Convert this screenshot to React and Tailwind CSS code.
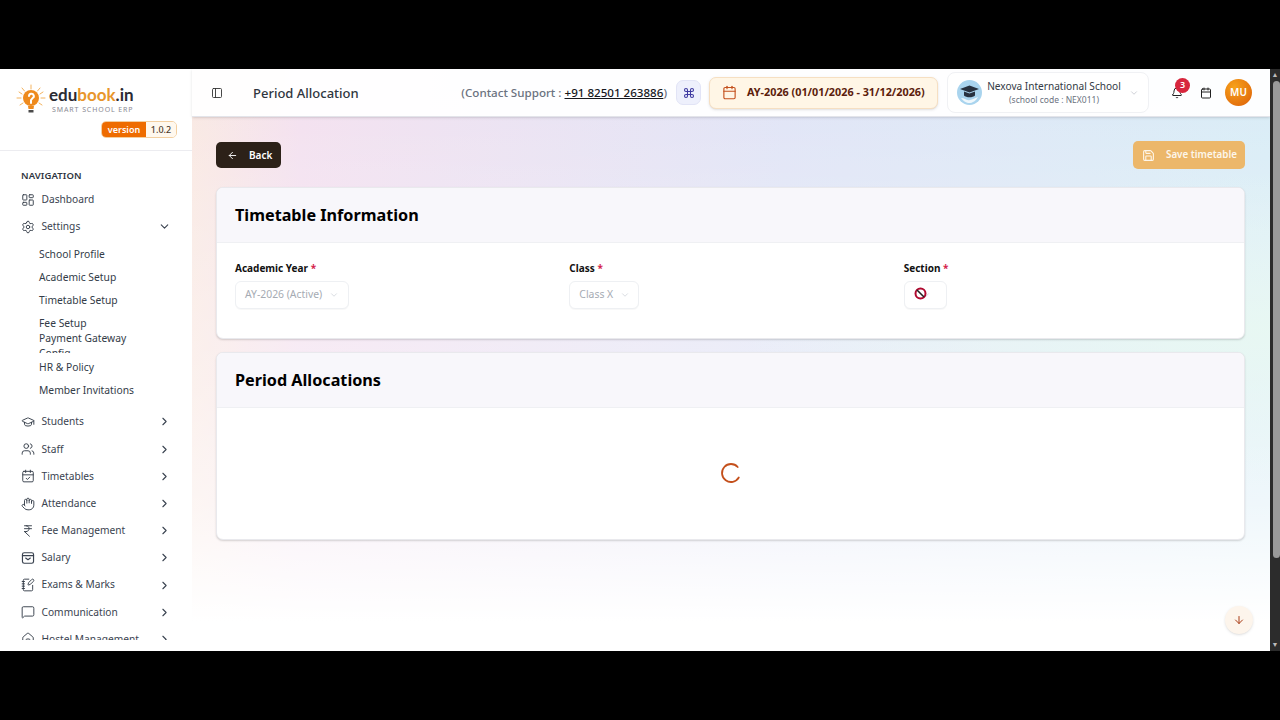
import React from 'react';
import {
  ArrowDown,
  ArrowLeft,
  Bell,
  Calendar,
  ChevronDown,
  ChevronRight,
  Command,
  GraduationCap,
  Hand,
  House,
  IndianRupee,
  LayoutDashboard,
  LoaderCircle,
  MessageSquare,
  NotebookPen,
  PanelLeft,
  Save,
  Settings,
  Users,
  CalendarCheck,
} from 'lucide-react';

const font = { fontFamily: '"Noto Sans", "Open Sans", sans-serif' };

const SalaryIcon = ({ size = 14 }) => (
  <svg width={size} height={size} viewBox="0 0 24 24" fill="none" stroke="currentColor" strokeWidth="2" strokeLinecap="round" strokeLinejoin="round">
    <rect x="2.5" y="3" width="19" height="18" rx="3" />
    <path d="M2.5 8h19" />
    <path d="M8 12l4 3 4-3" />
  </svg>
);

const Logo = () => (
  <svg width="30" height="32" viewBox="0 0 30 32" fill="none">
    <g stroke="#f4b35e" strokeWidth="1" strokeLinecap="round">
      <path d="M15 1v4M6 4l2.5 3M24 4l-2.5 3M1 14h4M25 14h4M3 8l3 2M27 8l-3 2M4 21l3-2M26 21l-3-2" />
    </g>
    <circle cx="15" cy="14" r="8" fill="#ee8a1d" />
    <path d="M12 22h6l-.5 3h-5z" fill="#ee8a1d" />
    <path d="M12.5 26h5v2.5h-5z" fill="#4a4a4a" />
    <path d="M13 12a2.4 2.4 0 1 1 3.5 2.2L15 16v3" stroke="#fff" strokeWidth="2" strokeLinecap="round" />
  </svg>
);

const SchoolLogo = () => (
  <svg width="25" height="25" viewBox="0 0 25 25">
    <circle cx="12.5" cy="12.5" r="12.5" fill="#a9d4ee" />
    <path d="M3 9l9.5-3.5L22 9l-9.5 3.5z" fill="#27313f" />
    <path d="M7 11.5v4c2 2.4 9 2.4 11 0v-4l-5.5 2z" fill="#27313f" />
    <path d="M4 18c4 0 5 3 9 2s5-2 8-3c-2 4-6 6.5-10 6-3-.5-5-2.500-7-5z" fill="#eef7fc" />
  </svg>
);

const SubItem = ({ children }) => (
  <div className="h-[23px] leading-[23px] text-[10.3px] text-[#333c48] whitespace-nowrap">{children}</div>
);

const NavItem = ({ icon: Icon, label, open, arrow = true }) => (
  <div className="h-[27.2px] flex items-center text-[#3a4350] shrink-0">
    <Icon size={14} strokeWidth={1.6} className="text-[#343c48] shrink-0" />
    <span className="ml-[6.500px] text-[10.2px] flex-1 whitespace-nowrap">{label}</span>
    {arrow && (open ? <ChevronDown size={13} strokeWidth={2} /> : <ChevronRight size={13} strokeWidth={2} />)}
  </div>
);

const Sidebar = () => (
  <aside className="w-[192px] shrink-0 h-full bg-white flex flex-col">
    <div className="h-[82px] shrink-0 border-b border-[#ececf0] relative pt-[15px] pl-[16px]">
      <div className="flex items-start">
        <Logo />
        <div className="ml-[3px]">
          <div className="text-[17px] leading-[22px] font-bold text-[#2b2b33]" style={{ fontFamily: 'Lato, sans-serif' }}>
            edu<span className="text-[#e8962c]">book</span>.in
          </div>
          <div className="ml-[3px] text-[7px] leading-[8px] tracking-[0.9px] text-[#8a8a93] whitespace-nowrap">SMART SCHOOL ERP</div>
        </div>
      </div>
      <div className="absolute left-[101px] top-[52px] w-[76px] h-[17px] flex rounded-[5px] border border-[#f3cfa0] overflow-hidden text-[9px] font-semibold">
        <div className="w-[44px] bg-[#ee6c00] text-white flex items-center justify-center">version</div>
        <div className="flex-1 bg-[#fff8ee] text-[#4a3a2c] flex items-center justify-center font-medium">1.0.2</div>
      </div>
    </div>
    <nav className="pl-[21px] pr-[21px] flex-1 min-h-0 flex flex-col">
      <div className="mt-[19px] text-[9.500px] leading-[12px] font-semibold tracking-[0.1px] text-[#2e3540]">NAVIGATION</div>
      <div className="mt-[4px] h-[454px] overflow-hidden flex flex-col">
        <NavItem icon={LayoutDashboard} label="Dashboard" arrow={false} />
        <NavItem icon={Settings} label="Settings" open />
        <div className="pl-[18px] pt-[3px] pb-[6px] shrink-0">
          <SubItem>School Profile</SubItem>
          <SubItem>Academic Setup</SubItem>
          <SubItem>Timetable Setup</SubItem>
          <SubItem>Fee Setup</SubItem>
          <div className="h-[22px] -mt-[4px] mb-[3px] overflow-hidden text-[10.3px] leading-[15px] text-[#333c48]">
            Payment Gateway
            <br />
            Config
          </div>
          <SubItem>HR &amp; Policy</SubItem>
          <SubItem>Member Invitations</SubItem>
        </div>
        <NavItem icon={GraduationCap} label="Students" />
        <NavItem icon={Users} label="Staff" />
        <NavItem icon={CalendarCheck} label="Timetables" />
        <NavItem icon={Hand} label="Attendance" />
        <NavItem icon={IndianRupee} label="Fee Management" />
        <NavItem icon={SalaryIcon} label="Salary" />
        <NavItem icon={NotebookPen} label="Exams & Marks" />
        <NavItem icon={MessageSquare} label="Communication" />
        <NavItem icon={House} label="Hostel Management" />
      </div>
    </nav>
  </aside>
);

const Header = () => (
  <header className="h-[48px] shrink-0 bg-white/95 border-b border-[#e3e4ea] shadow-sm flex items-center pl-[19px]">
    <PanelLeft size={12} strokeWidth={1.8} className="text-[#333]" />
    <div className="ml-[30px] mt-[2px] text-[13px] text-[#2f3640] font-medium">Period Allocation</div>
    <div className="ml-auto text-[11.6px] font-medium text-[#6b7280] whitespace-nowrap">
      (Contact Support : <span className="text-[#16181d] underline">+91 82501 263886</span>)
    </div>
    <div className="ml-[9px] w-[25px] h-[25px] rounded-[7px] bg-[#eef0fc] border border-[#e2e4f6] flex items-center justify-center">
      <Command size={12} strokeWidth={2.2} className="text-[#3f3aa0]" />
    </div>
    <div className="ml-[8px] w-[229px] h-[32px] rounded-[7px] bg-[#fff6e6] border border-[#f6dfc2] shadow-sm flex items-center pl-[12px] text-[10.8px] font-bold text-[#5c1d0c] whitespace-nowrap">
      <Calendar size={15} strokeWidth={1.8} className="text-[#c4501c] mr-[10px]" />
      AY-2026 (01/01/2026 - 31/12/2026)
    </div>
    <div className="ml-[9px] w-[202px] h-[41px] rounded-[8px] bg-white border border-[#f0f1f4] flex items-center pl-[9px]">
      <SchoolLogo />
      <div className="ml-[5px] w-[134px] text-center">
        <div className="text-[10.1px] leading-[14px] text-[#333a45] whitespace-nowrap">Nexova International School</div>
        <div className="text-[8.500px] leading-[14px] text-[#6b7280] whitespace-nowrap">(school code : NEX011)</div>
      </div>
      <ChevronDown size={10} className="ml-[8px] text-[#c5c8cf]" />
    </div>
    <div className="relative ml-[22px] w-[12px] h-[12px]">
      <Bell size={12} strokeWidth={2} className="text-[#222]" />
      <div className="absolute -top-[9px] left-[4px] w-[15px] h-[15px] rounded-full bg-[#d7263d] text-white text-[9px] font-semibold flex items-center justify-center">3</div>
    </div>
    <Calendar size={12} strokeWidth={2} className="ml-[17px] text-[#222]" />
    <div className="ml-[13px] mr-[18px] w-[27px] h-[27px] rounded-full bg-[radial-gradient(circle_at_35%_30%,#f7a21b,#dc5f08)] text-white text-[10px] font-semibold flex items-center justify-center">MU</div>
  </header>
);

const Field = ({ label, value, width }) => (
  <div>
    <div className="text-[10px] leading-[14px] font-bold text-[#111]">
      {label} <span className="text-[#d41e4b]">*</span>
    </div>
    <div className={`mt-[6px] h-[28px] ${width} rounded-[6px] bg-white border border-[#eef0f3] shadow-[0_1px_1px_rgba(0,0,0,0.03)] flex items-center pl-[9px] text-[10.4px] text-[#a6abb3] whitespace-nowrap`}>
      {value}
      <ChevronDown size={10} className="ml-[7px] text-[#d3d6dc]" />
    </div>
  </div>
);

const CardTitle = ({ children }) => (
  <div className="h-[55px] bg-[#f8f7fb] border-b border-[#eff0f3] flex items-center pl-[18px] text-[16.2px] font-bold text-black">{children}</div>
);

const App = () => (
  <div className="h-[720px] w-[1280px] bg-black flex flex-col overflow-hidden" style={font}>
    <div className="h-[69px] shrink-0" />
    <div className="h-[582px] shrink-0 flex relative">
      <Sidebar />
      <div className="flex-1 min-w-0 flex flex-col bg-[radial-gradient(ellipse_at_100%_45%,rgba(232,248,242,0.9),rgba(232,248,242,0)_35%),linear-gradient(180deg,rgba(255,255,255,0)_0%,rgba(255,255,255,0.4)_55%,rgba(255,255,255,0.6)_75%,#ffffff_95%),linear-gradient(90deg,#f9e8e2_0%,#f3e0ef_10%,#e0e4f6_55%,#d8ecf6_100%)]">
        <Header />
        <main className="flex-1 min-h-0 pl-[24px] pr-[25px] pt-[24px]">
          <div className="h-[28px] flex items-center justify-between">
            <button className="w-[65px] h-[26px] rounded-[5px] bg-[#2c2118] text-white text-[10px] font-semibold flex items-center pl-[11px]">
              <ArrowLeft size={11} strokeWidth={2} />
              <span className="ml-[11px]">Back</span>
            </button>
            <button className="w-[112px] h-[28px] rounded-[5px] bg-[#ecb76a] text-[#fdf6ea] text-[9.800px] font-semibold flex items-center pl-[9px]">
              <Save size={13} strokeWidth={2} />
              <span className="ml-[11px]">Save timetable</span>
            </button>
          </div>
          <section className="h-[152px] mt-[18px] rounded-[7px] bg-white border border-[#e9e9ed] shadow-[0_1px_2px_rgba(0,0,0,0.16)] overflow-hidden">
            <CardTitle>Timetable Information</CardTitle>
            <div className="grid grid-cols-3 pl-[18px] pr-[6px] pt-[18px]">
              <Field label="Academic Year" value="AY-2026 (Active)" width="w-[114px]" />
              <Field label="Class" value="Class X" width="w-[70px]" />
              <div className="relative">
                <Field label="Section" value="" width="w-[43px]" />
                <svg className="absolute left-[10px] top-[26px]" width="13" height="13" viewBox="0 0 13 13" fill="none">
                  <circle cx="6.500" cy="6.500" r="5" fill="#fff" stroke="#b0092f" strokeWidth="2" />
                  <path d="M3 3l7 7" stroke="#222" strokeWidth="1.600" />
                </svg>
              </div>
            </div>
          </section>
          <section className="h-[188px] mt-[13px] rounded-[7px] bg-white border border-[#e9e9ed] shadow-[0_1px_2px_rgba(0,0,0,0.16)] overflow-hidden">
            <CardTitle>Period Allocations</CardTitle>
            <div className="h-[129px] flex items-center justify-center">
              <LoaderCircle size={24} strokeWidth={1.8} className="text-[#c4501c] rotate-[30deg]" />
            </div>
          </section>
        </main>
      </div>
      <div className="w-[10px] shrink-0 bg-[#2c2c2c] flex flex-col items-end">
        <div className="w-full text-center text-[#bbb] text-[7px] leading-[12px]">▲</div>
        <div className="w-[7px] h-[477px] rounded-[4px] bg-[#9a9a9a]" />
        <div className="mt-auto w-full text-center text-[#bbb] text-[7px] leading-[12px]">▼</div>
      </div>
      <button className="absolute left-[1225px] top-[537px] w-[28px] h-[28px] rounded-full bg-[#fdf5ec] shadow flex items-center justify-center">
        <ArrowDown size={12} strokeWidth={2} className="text-[#a93d17]" />
      </button>
    </div>
    <div className="flex-1" />
  </div>
);

export default App;
